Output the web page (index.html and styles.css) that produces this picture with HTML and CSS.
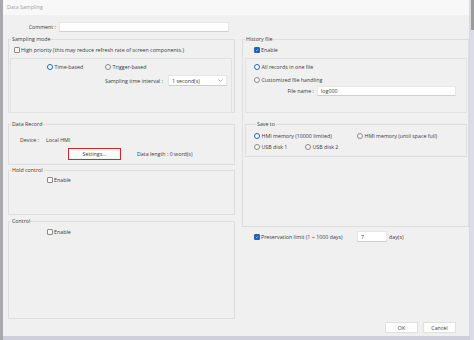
FILE: index.html
```html
<!DOCTYPE html>
<html>
<head>
<meta charset="utf-8">
<link rel="stylesheet" href="styles.css">
</head>
<body>
<div class="screen">
  <div class="edge-left"></div>
  <div class="dialog">
    <div class="titlebar">Data Sampling</div>
    <div class="comment-row">
      <span class="comment-label">Comment :</span>
      <span class="input comment-input"></span>
    </div>
    <div class="columns">
      <div class="col col-left">
        <fieldset class="group g-sampling">
          <legend>Sampling mode</legend>
          <div class="row hp-row"><span class="check"></span><span>High priority (this may reduce refresh rate of screen components.)</span></div>
          <div class="subbox sampling-sub">
            <div class="row radios-row">
              <span class="opt w58"><span class="radio on"></span>Time-based</span>
              <span class="opt"><span class="radio"></span>Trigger-based</span>
            </div>
            <div class="row interval-row">
              <span class="interval-label">Sampling time interval :</span>
              <span class="select"><span>1 second(s)</span><svg class="chev" width="5" height="3" viewBox="0 0 5 3"><path d="M0.5 0.5 L2.5 2.5 L4.5 0.5" fill="none" stroke="#777" stroke-width="0.6"/></svg></span>
            </div>
          </div>
        </fieldset>
        <fieldset class="group g-record">
          <legend>Data Record</legend>
          <div class="row device-row"><span class="device-label">Device :</span><span>Local HMI</span></div>
          <div class="row settings-row">
            <span class="btn settings-btn">Settings...</span>
            <span class="data-length">Data length : 0 word(s)</span>
          </div>
        </fieldset>
        <fieldset class="group g-hold">
          <legend>Hold control</legend>
          <div class="row enable-row"><span class="check"></span><span>Enable</span></div>
        </fieldset>
        <fieldset class="group g-control">
          <legend>Control</legend>
          <div class="row enable-row control-enable"><span class="check"></span><span>Enable</span></div>
        </fieldset>
      </div>
      <div class="col col-right">
        <fieldset class="group g-history">
          <legend>History file</legend>
          <div class="row hist-enable"><span class="check on"><svg width="6" height="6" viewBox="0 0 6 6"><path d="M1.3 3.1 L2.5 4.2 L4.7 1.8" fill="none" stroke="#fff" stroke-width="0.8"/></svg></span><span>Enable</span></div>
          <div class="subbox hist-sub">
            <div class="row hist-r1"><span class="radio on"></span><span>All records in one file</span></div>
            <div class="row hist-r2"><span class="radio"></span><span>Customized file handling</span></div>
            <div class="row file-row">
              <span class="file-label">File name :</span>
              <span class="input file-input">log000</span>
            </div>
          </div>
          <fieldset class="group g-save">
            <legend>Save to</legend>
            <div class="row save-r1">
              <span class="opt w103"><span class="radio on"></span>HMI memory (10000 limited)</span>
              <span class="opt"><span class="radio"></span>HMI memory (until space full)</span>
            </div>
            <div class="row save-r2">
              <span class="opt w51"><span class="radio"></span>USB disk 1</span>
              <span class="opt"><span class="radio"></span>USB disk 2</span>
            </div>
          </fieldset>
        </fieldset>
        <div class="preserve">
          <div class="row preserve-row">
            <span class="opt w103"><span class="check on"><svg width="6" height="6" viewBox="0 0 6 6"><path d="M1.3 3.1 L2.5 4.2 L4.7 1.8" fill="none" stroke="#fff" stroke-width="0.8"/></svg></span>Preservation limit (1 ~ 1000 days)</span>
            <span class="input days-input">7</span>
            <span class="days-unit">day(s)</span>
          </div>
        </div>
      </div>
    </div>
    <div class="buttons">
      <span class="btn dlg-btn">OK</span>
      <span class="btn dlg-btn">Cancel</span>
    </div>
  </div>
  <div class="edge-right">
    <div class="thumb"></div>
  </div>
</div>
</body>
</html>
```

FILE: styles.css
```css
* { box-sizing: border-box; }
html, body { margin: 0; padding: 0; }
body {
  width: 474px;
  height: 340px;
  overflow: hidden;
  background: #cfcfdc;
  font-family: "Open Sans", "Liberation Sans", sans-serif;
  font-size: 5.3px;
  line-height: 6px;
  color: #3a3a3a;
}
.screen {
  display: flex;
  height: 340px;
}
.edge-left {
  width: 3px;
  height: 340px;
  background: #a9a9ad;
}
.dialog {
  width: 467px;
  height: 336px;
  background: #f0f0f0;
  display: flex;
  flex-direction: column;
  border-right: 1px solid #d9d9d9;
}
.edge-right {
  width: 4px;
  height: 340px;
  background: #dcdce8;
}
.thumb {
  margin-left: 1px;
  width: 3px;
  height: 30px;
  background: #9b9b9b;
}
.titlebar {
  height: 15px;
  background: #f8f8f8;
  color: #a0a0a0;
  padding-left: 4px;
  line-height: 15px;
}
.comment-row {
  display: flex;
  align-items: center;
  margin-top: 7px;
  height: 10px;
}
.comment-label {
  width: 56px;
  text-align: right;
  padding-right: 3px;
}
.input {
  display: inline-flex;
  align-items: center;
  background: #ffffff;
  border: 1px solid #e6e6e6;
  border-bottom-color: #cfcfcf;
  height: 10px;
  padding-left: 3px;
}
.comment-input { width: 170px; }

.columns {
  display: flex;
  gap: 7px;
  margin-top: 4px;
  padding-left: 5px;
}
.col { display: flex; flex-direction: column; }
.col-left { width: 227px; }
.col-right { width: 227px; }

.group {
  margin: 0;
  padding: 0;
  min-width: 0;
  border: 1px solid #dedede;
}
.group legend {
  padding: 0 1px;
  margin-left: 2px;
  line-height: 6px;
  height: 6px;
}
.row {
  display: flex;
  align-items: center;
  height: 6px;
  white-space: nowrap;
}
.opt { display: inline-flex; align-items: center; }
.w58 { width: 58px; }
.w103 { width: 103px; }
.w51 { width: 51px; }

.check {
  display: inline-flex;
  align-items: center;
  justify-content: center;
  width: 6px;
  height: 6px;
  border: 0.8px solid #8a8a8a;
  border-radius: 1px;
  background: #f8f8f8;
  margin-right: 1px;
  flex: none;
}
.check.on {
  background: #1f63b8;
  border-color: #1f63b8;
}
.check svg { display: block; }
.radio {
  display: inline-block;
  width: 6px;
  height: 6px;
  border-radius: 50%;
  border: 0.8px solid #8a8a8a;
  background: #f8f8f8;
  margin-right: 1.5px;
  flex: none;
}
.radio.on {
  border: 1.6px solid #1f63b8;
  background: #ffffff;
}

/* Sampling mode */
.g-sampling { height: 77px; }
.hp-row { margin-top: 5px; padding-left: 5px; }
.subbox {
  border: 1px solid #e2e2e2;
}
.sampling-sub {
  margin-top: 5px;
  margin-left: 1px;
  width: 222px;
  height: 55px;
  padding-left: 36px;
}
.radios-row { margin-top: 5px; }
.interval-row {
  margin-top: 5px;
  height: 11px;
  padding-left: 58px;
}
.interval-label { width: 63px; }
.select {
  display: inline-flex;
  align-items: center;
  justify-content: space-between;
  width: 59px;
  height: 11px;
  background: #fff;
  border: 1px solid #e6e6e6;
  border-bottom-color: #cfcfcf;
  padding: 0 3px;
}
.chev { display: block; }

/* Data record */
.g-record { height: 44px; margin-top: 8px; }
.device-row { margin-top: 10px; padding-left: 11px; }
.device-label { width: 26px; }
.settings-row { margin-top: 5px; height: 12px; padding-left: 59px; }
.btn {
  display: inline-flex;
  align-items: center;
  justify-content: center;
  background: #fbfbfb;
  border: 1px solid #d6d6d6;
}
.settings-btn {
  width: 53px;
  height: 12px;
  border: 1px solid #cc2b2b;
  box-shadow: inset 0 0 0 1px #f3f3f3;
}
.data-length { margin-left: 16px; }

/* Hold / control */
.g-hold { height: 48px; margin-top: 2px; }
.enable-row { margin-top: 4px; padding-left: 38px; }
.g-control { height: 101px; margin-top: 3px; }
.control-enable { margin-top: 5px; }

/* History */
.g-history { height: 191px; }
.hist-enable { margin-top: 5px; padding-left: 11px; }
.hist-sub {
  margin-top: 5px;
  margin-left: 2px;
  width: 222px;
  height: 55px;
  padding-left: 8px;
}
.hist-r1 { margin-top: 5px; }
.hist-r2 { margin-top: 7px; }
.file-row { margin-top: 3px; height: 10px; padding-left: 31px; }
.file-label { width: 32px; text-align: right; padding-right: 3px; }
.file-input { width: 139px; }

.g-save {
  margin-top: 8px;
  margin-left: 2px;
  width: 222px;
  height: 36px;
  padding-left: 8px;
}
.save-r1 { margin-top: 6px; }
.save-r2 { margin-top: 5px; }

/* Preservation */
.preserve { padding-left: 12px; }
.preserve-row { margin-top: 4px; height: 11px; }
.days-input { width: 30px; height: 11px; }
.days-unit { margin-left: 2px; }

/* Buttons */
.buttons {
  display: flex;
  justify-content: flex-end;
  gap: 5px;
  margin-top: 3px;
  padding-right: 13px;
}
.dlg-btn {
  width: 33px;
  height: 11px;
  background: #fdfdfd;
  border: 1px solid #e0e0e0;
}
```
